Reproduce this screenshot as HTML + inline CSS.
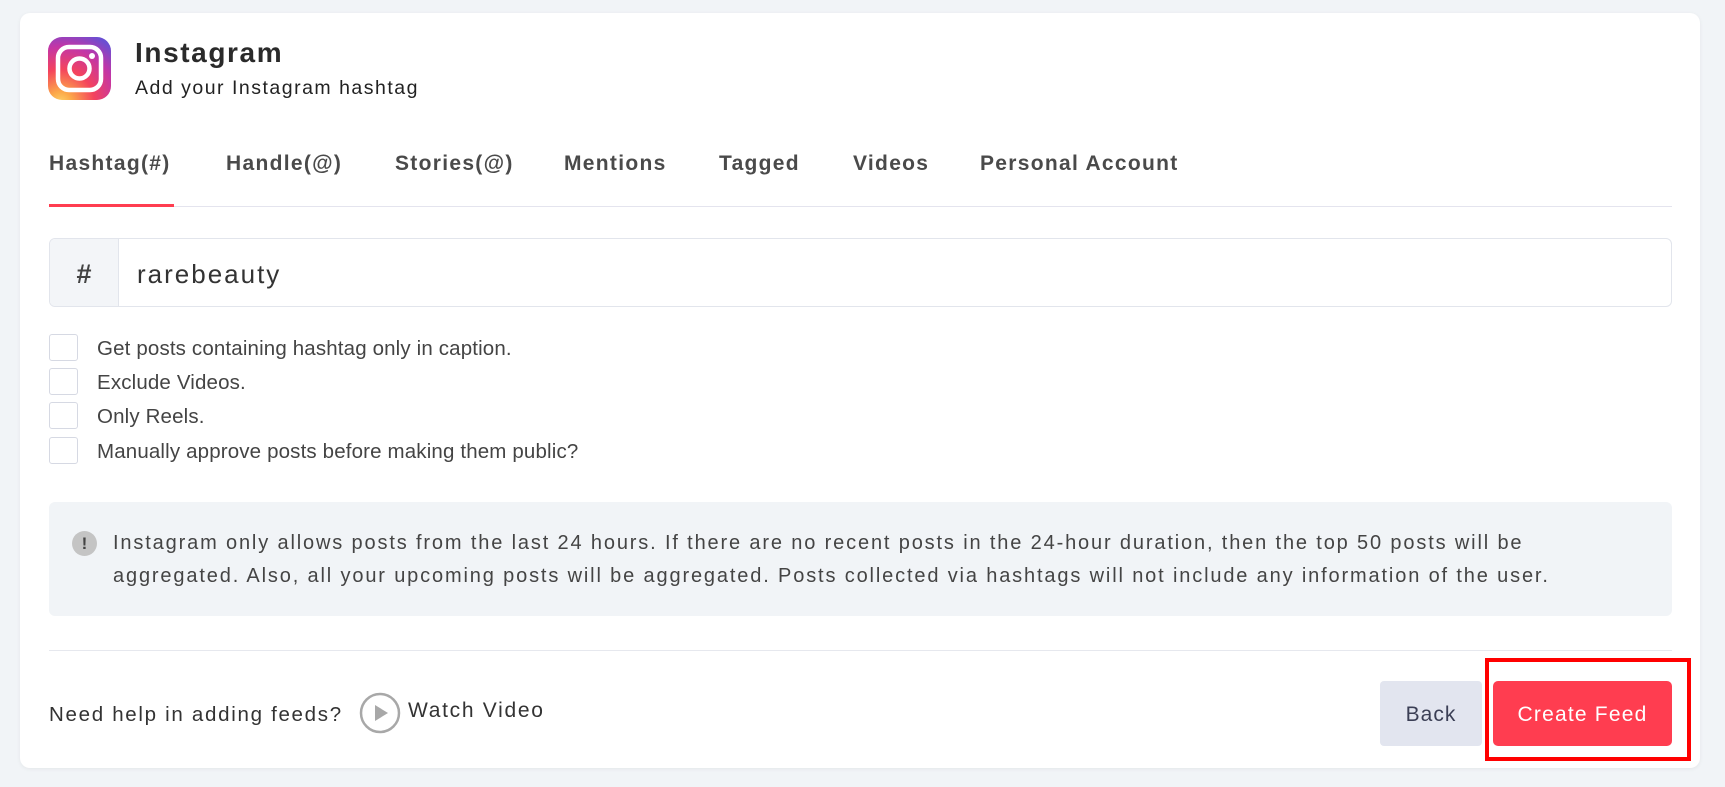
<!DOCTYPE html>
<html><head><meta charset="utf-8"><style>
*{box-sizing:border-box;margin:0;padding:0}
body{width:1725px;height:787px;background:#f1f4f7;font-family:"Liberation Sans",sans-serif;position:relative;overflow:hidden;color:#333}
.card{position:absolute;left:20px;top:13px;width:1680px;height:755px;background:#fff;border-radius:10px;box-shadow:0 1px 4px rgba(0,0,0,.06)}
.a{position:absolute;white-space:nowrap}
.tab{position:absolute;top:152px;font-size:21px;font-weight:bold;color:#4a4a4a;letter-spacing:1.3px}
.cb{position:absolute;left:49px;width:29px;height:27px;border:1.5px solid #d6d9e3;border-radius:3px;background:#fff}
.cl{position:absolute;left:97px;font-size:20.5px;color:#444;letter-spacing:0.15px}
</style></head><body>
<div class="card"></div>
<svg class="a" style="left:48px;top:37px" width="63" height="63" viewBox="0 0 63 63">
<defs><radialGradient id="g" cx="0.2" cy="1.05" r="1.2"><stop offset="0" stop-color="#fdd36b"/><stop offset="0.15" stop-color="#fca949"/><stop offset="0.45" stop-color="#f4435d"/><stop offset="0.75" stop-color="#c335a6"/><stop offset="1" stop-color="#6a4fd2"/></radialGradient></defs>
<rect width="63" height="63" rx="14" fill="url(#g)"/>
<rect x="10" y="10" width="43" height="43" rx="11" fill="none" stroke="#fff" stroke-width="4.5"/>
<circle cx="31.5" cy="31.5" r="10" fill="none" stroke="#fff" stroke-width="4.5"/>
<circle cx="44" cy="19" r="3" fill="#fff"/>
</svg>
<div class="a" style="left:135px;top:37px;font-size:28px;font-weight:bold;color:#2a2a2a;letter-spacing:1.6px">Instagram</div>
<div class="a" style="left:135px;top:77px;font-size:19.5px;color:#222;letter-spacing:1.5px">Add your Instagram hashtag</div>
<div class="tab" style="left:49px">Hashtag(#)</div>
<div class="tab" style="left:226px">Handle(@)</div>
<div class="tab" style="left:395px">Stories(@)</div>
<div class="tab" style="left:564px">Mentions</div>
<div class="tab" style="left:719px">Tagged</div>
<div class="tab" style="left:853px">Videos</div>
<div class="tab" style="left:980px">Personal Account</div>
<div class="a" style="left:49px;top:206px;width:1623px;height:1px;background:#e4e4ee"></div>
<div class="a" style="left:49px;top:204px;width:125px;height:3px;background:#ff3d50"></div>
<div class="a" style="left:49px;top:238px;width:1623px;height:69px;border:1px solid #e2e5ec;border-radius:6px;overflow:hidden">
<div style="position:absolute;left:0;top:0;width:69px;height:100%;background:#f3f5f8;border-right:1px solid #e2e5ec;font-size:27px;font-weight:bold;color:#444;text-align:center;line-height:70px">#</div>
<div style="position:absolute;left:87px;top:2px;line-height:66px;font-size:26px;color:#333;letter-spacing:2px">rarebeauty</div>
</div>
<div class="cb" style="top:334px"></div><div class="cl" style="top:337px">Get posts containing hashtag only in caption.</div>
<div class="cb" style="top:368px"></div><div class="cl" style="top:371px">Exclude Videos.</div>
<div class="cb" style="top:402px"></div><div class="cl" style="top:405px">Only Reels.</div>
<div class="cb" style="top:437px"></div><div class="cl" style="top:440px">Manually approve posts before making them public?</div>
<div class="a" style="left:49px;top:502px;width:1623px;height:114px;background:#f1f4f7;border-radius:6px"></div>
<div class="a" style="left:72px;top:531px;width:25px;height:25px;border-radius:50%;background:#c4c4c4;color:#444;font-size:17px;font-weight:bold;text-align:center;line-height:25px">!</div>
<div class="a" style="left:113px;top:527px;font-size:20px;color:#444;line-height:33px;letter-spacing:1.85px">Instagram only allows posts from the last 24 hours. If there are no recent posts in the 24-hour duration, then the top 50 posts will be<br>aggregated. Also, all your upcoming posts will be aggregated. Posts collected via hashtags will not include any information of the user.</div>
<div class="a" style="left:49px;top:650px;width:1623px;height:1px;background:#e6e8ee"></div>
<div class="a" style="left:49px;top:703px;font-size:20.5px;color:#333;letter-spacing:1.7px">Need help in adding feeds?</div>
<svg class="a" style="left:359px;top:692px" width="42" height="42" viewBox="0 0 42 42"><circle cx="21" cy="21" r="19" fill="none" stroke="#a8a8a8" stroke-width="2.5"/><path d="M16 13 L29 21 L16 29Z" fill="#a8a8a8"/></svg>
<div class="a" style="left:408px;top:699px;font-size:21px;color:#333;letter-spacing:1.7px">Watch Video</div>
<div class="a" style="left:1380px;top:681px;width:102px;height:65px;background:#e2e5ef;border-radius:4px;font-size:21px;color:#3b3f55;text-align:center;line-height:67px;letter-spacing:1px">Back</div>
<div class="a" style="left:1485px;top:658px;width:206px;height:103px;border:4px solid #ff0000"></div>
<div class="a" style="left:1493px;top:681px;width:179px;height:65px;background:#ff3d50;border-radius:5px;font-size:21px;color:#fff;text-align:center;line-height:67px;letter-spacing:1.2px">Create Feed</div>
</body></html>
